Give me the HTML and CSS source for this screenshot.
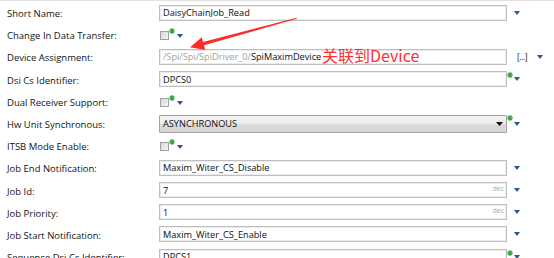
FILE: index.html
```html
<!DOCTYPE html>
<html>
<head>
<meta charset="utf-8">
<link rel="stylesheet" href="styles.css">
</head>
<body>
<div class="form">
  <div class="row">
    <div class="label">Short Name:</div>
    <div class="input">DaisyChainJob_Read</div>
    <div class="extras"><span class="slot"></span><svg class="drop" viewBox="0 0 6 4"><polygon points="0,0 6,0 3,4"/></svg></div>
  </div>
  <div class="row">
    <div class="label">Change In Data Transfer:</div>
    <div class="check-field"><span class="checkbox"></span><svg class="star" viewBox="0 0 6 6"><path d="M3 0V6M0 3H6M0.9 0.9L5.1 5.1M5.1 0.9L0.9 5.1"/></svg><svg class="drop" viewBox="0 0 6 4"><polygon points="0,0 6,0 3,4"/></svg></div>
    <div class="extras"></div>
  </div>
  <div class="row">
    <div class="label">Device Assignment:</div>
    <div class="input"><span class="path">/Spi/Spi/SpiDriver_0/</span>SpiMaximDevice</div>
    <div class="extras"><span class="ellipsis">[...]</span><svg class="drop" viewBox="0 0 6 4"><polygon points="0,0 6,0 3,4"/></svg></div>
  </div>
  <div class="row">
    <div class="label">Dsi Cs Identifier:</div>
    <div class="input">DPCS0</div>
    <div class="extras"><span class="slot"><svg class="star" viewBox="0 0 6 6"><path d="M3 0V6M0 3H6M0.9 0.9L5.1 5.1M5.1 0.9L0.9 5.1"/></svg></span><svg class="drop" viewBox="0 0 6 4"><polygon points="0,0 6,0 3,4"/></svg></div>
  </div>
  <div class="row">
    <div class="label">Dual Receiver Support:</div>
    <div class="check-field"><span class="checkbox"></span><svg class="star" viewBox="0 0 6 6"><path d="M3 0V6M0 3H6M0.9 0.9L5.1 5.1M5.1 0.9L0.9 5.1"/></svg><svg class="drop" viewBox="0 0 6 4"><polygon points="0,0 6,0 3,4"/></svg></div>
    <div class="extras"></div>
  </div>
  <div class="row">
    <div class="label">Hw Unit Synchronous:</div>
    <div class="combo"><span>ASYNCHRONOUS</span><svg class="combo-arrow" viewBox="0 0 7 4"><polygon points="0,0 7,0 3.5,4"/></svg></div>
    <div class="extras"><span class="slot slot-top"><svg class="star" viewBox="0 0 6 6"><path d="M3 0V6M0 3H6M0.9 0.9L5.1 5.1M5.1 0.9L0.9 5.1"/></svg></span><svg class="drop" viewBox="0 0 6 4"><polygon points="0,0 6,0 3,4"/></svg></div>
  </div>
  <div class="row">
    <div class="label">ITSB Mode Enable:</div>
    <div class="check-field"><span class="checkbox"></span><svg class="star" viewBox="0 0 6 6"><path d="M3 0V6M0 3H6M0.9 0.9L5.1 5.1M5.1 0.9L0.9 5.1"/></svg><svg class="drop" viewBox="0 0 6 4"><polygon points="0,0 6,0 3,4"/></svg></div>
    <div class="extras"></div>
  </div>
  <div class="row">
    <div class="label">Job End Notification:</div>
    <div class="input">Maxim_Witer_CS_Disable</div>
    <div class="extras"><span class="slot"></span><svg class="drop" viewBox="0 0 6 4"><polygon points="0,0 6,0 3,4"/></svg></div>
  </div>
  <div class="row">
    <div class="label">Job Id:</div>
    <div class="input"><span class="grow">7</span><span class="unit">dec</span></div>
    <div class="extras"><span class="slot"></span><svg class="drop" viewBox="0 0 6 4"><polygon points="0,0 6,0 3,4"/></svg></div>
  </div>
  <div class="row">
    <div class="label">Job Priority:</div>
    <div class="input"><span class="grow">1</span><span class="unit">dec</span></div>
    <div class="extras"><span class="slot"></span><svg class="drop" viewBox="0 0 6 4"><polygon points="0,0 6,0 3,4"/></svg></div>
  </div>
  <div class="row">
    <div class="label">Job Start Notification:</div>
    <div class="input">Maxim_Witer_CS_Enable</div>
    <div class="extras"><span class="slot"></span><svg class="drop" viewBox="0 0 6 4"><polygon points="0,0 6,0 3,4"/></svg></div>
  </div>
  <div class="row">
    <div class="label">Sequence Dsi Cs Identifier:</div>
    <div class="input">DPCS1</div>
    <div class="extras"><span class="slot"><svg class="star" viewBox="0 0 6 6"><path d="M3 0V6M0 3H6M0.9 0.9L5.1 5.1M5.1 0.9L0.9 5.1"/></svg></span><svg class="drop" viewBox="0 0 6 4"><polygon points="0,0 6,0 3,4"/></svg></div>
  </div>
</div>
<svg class="annot-arrow" viewBox="0 0 554 258"><polygon points="190,47.3 205.2,49.9 204,45.3 296.8,18.8 296.6,17.8 203,41.9 201.8,37.3"/></svg>
<div class="annot-text">关联到Device</div>
</body>
</html>
```
FILE: styles.css
```css
html, body {
  margin: 0;
  padding: 0;
  background: #ffffff;
}
body {
  width: 554px;
  height: 258px;
  overflow: hidden;
  position: relative;
  font-family: "Open Sans", "Liberation Sans", sans-serif;
  color: #141414;
}
.form {
  border-top: 1px solid #e0e0e0;
  padding-top: 0.5px;
}
.row {
  display: grid;
  grid-template-columns: 159px 348px 1fr;
  height: 22.2px;
  align-items: center;
}
.label {
  padding-left: 7px;
  padding-top: 3px;
  font-size: 9.5px;
  line-height: 12px;
  white-space: nowrap;
}
.input {
  height: 16px;
  box-sizing: border-box;
  border: 1px solid #bfbfbf;
  box-shadow: inset 0 0 0 1px #ececec;
  background: #ffffff;
  display: flex;
  align-items: center;
  padding: 0 3px;
  font-size: 9.2px;
  color: #0e0e0e;
  white-space: nowrap;
  overflow: hidden;
}
.path {
  color: #a2a2a2;
}
.grow {
  flex: 1;
}
.unit {
  font-size: 7px;
  color: #a8a8a8;
  margin-top: -3px;
  margin-right: -1px;
}
.combo {
  height: 18px;
  box-sizing: border-box;
  border: 1px solid #a3a3a3;
  border-radius: 1px;
  background: linear-gradient(#f4f4f4 0%, #ececec 45%, #d9d9d9 55%, #d6d6d6 100%);
  display: flex;
  align-items: center;
  justify-content: space-between;
  padding: 0 3px;
  font-size: 9.2px;
  color: #0e0e0e;
}
.combo-arrow {
  width: 7px;
  height: 4px;
  fill: #111111;
}
.extras {
  display: flex;
  align-items: center;
  height: 16px;
}
.slot {
  width: 7px;
  height: 16px;
  display: flex;
  align-items: flex-start;
}
.slot .star {
  margin-top: 1px;
}
.slot-top .star {
  margin-top: -1px;
}
.drop {
  width: 6px;
  height: 4px;
  fill: #2b5a93;
}
.star {
  width: 6px;
  height: 6px;
  stroke: #2f9e36;
  stroke-width: 1.1;
  fill: none;
}
.ellipsis {
  margin-left: 10px;
  width: 14px;
  font-family: "Liberation Sans", sans-serif;
  font-size: 9px;
  line-height: 10px;
  color: #3a3a3a;
  letter-spacing: -0.5px;
  margin-right: 6px;
  margin-top: 1px;
}
.check-field {
  display: flex;
  align-items: center;
  padding-left: 1px;
  padding-top: 2px;
}
.checkbox {
  width: 9px;
  height: 9px;
  box-sizing: border-box;
  border: 1px solid #a0a0a0;
  background: linear-gradient(135deg, #d6d6d6, #f6f6f6);
}
.check-field .star {
  align-self: flex-start;
  margin-left: 0;
  margin-top: -3px;
}
.check-field .drop {
  margin-left: 2px;
  margin-top: 1px;
}
.annot-arrow {
  position: absolute;
  left: 0;
  top: 0;
  width: 554px;
  height: 258px;
  fill: #ff2b2b;
  pointer-events: none;
}
.annot-text {
  position: absolute;
  left: 322px;
  top: 47.3px;
  font-family: "Noto Sans CJK SC", "Noto Sans", sans-serif;
  font-size: 16px;
  line-height: 16px;
  color: #ff3030;
  white-space: nowrap;
}
```
